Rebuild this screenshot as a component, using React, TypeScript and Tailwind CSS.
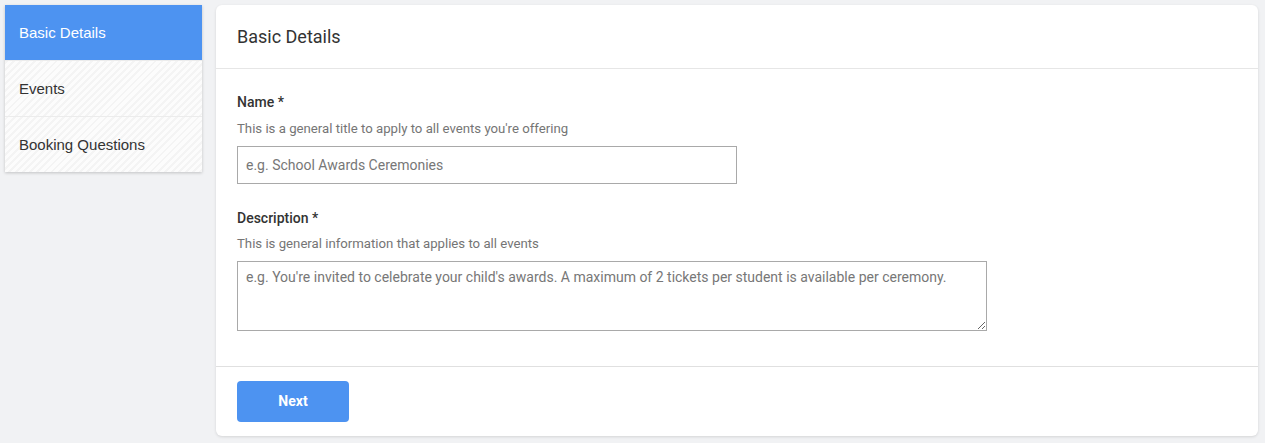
import React from 'react'

const steps = ['Basic Details', 'Events', 'Booking Questions']

export default function App() {
  return (
    <div className="min-h-[443px] bg-[#f1f2f4] pt-[5px] pl-[5px] pr-[7px] flex items-start gap-[14px]" style={{ fontFamily: 'Roboto, "Liberation Sans", sans-serif' }}>
      {/* Step nav */}
      <nav className="w-[197px] shrink-0 bg-[repeating-linear-gradient(135deg,#f4f4f4_0px,#f4f4f4_2px,#fcfcfc_2px,#fcfcfc_5px)] shadow-[0_1px_3px_rgba(0,0,0,0.2)] font-['Liberation_Sans',Arial,sans-serif]">
        {steps.map((s, i) => (
          <div
            key={s}
            className={
              i === 0
                ? 'h-[55px] flex items-center pl-[14px] pt-[2px] text-[15px] text-white bg-[#4d93f1]'
                : 'h-[56px] flex items-center pl-[14px] pt-[2px] text-[15px] text-[#333] border-t border-[#ececec]'
            }
          >
            {s}
          </div>
        ))}
      </nav>

      {/* Card */}
      <div className="flex-1 h-[431px] bg-white rounded-[6px] shadow-[0_1px_3px_rgba(0,0,0,0.12)] flex flex-col">
        <div className="h-[64px] border-b border-[#e6e6e6] flex items-center pl-[21px]">
          <h1 className="text-[18px] text-[#333]">Basic Details</h1>
        </div>

        <div className="pl-[21px] pt-[23px] pb-[35px] border-b border-[#e0e0e0]">
          <label className="block text-[14px] leading-[20px] font-medium text-[#333]">Name *</label>
          <p className="mt-[9px] text-[13.2px] leading-[16px] text-[#757575]">This is a general title to apply to all events you're offering</p>
          <input
            className="mt-[9px] block w-[500px] h-[38px] border border-[#a9a9a9] px-[8px] text-[14px] text-[#333] placeholder:text-[#777] outline-none"
            placeholder="e.g. School Awards Ceremonies"
          />

          <label className="block mt-[24px] text-[14px] leading-[20px] font-medium text-[#333]">Description *</label>
          <p className="mt-[8px] text-[13.2px] leading-[16px] text-[#757575]">This is general information that applies to all events</p>
          <textarea
            className="mt-[9px] block w-[750px] h-[70px] border border-[#a9a9a9] px-[8px] pt-[6px] text-[14px] leading-[18px] text-[#333] placeholder:text-[#777] outline-none"
            placeholder="e.g. You're invited to celebrate your child's awards. A maximum of 2 tickets per student is available per ceremony."
          />
        </div>

        <div className="pl-[21px] pt-[14px]">
          <button className="w-[112px] h-[41px] rounded-[4px] bg-[#4d93f1] text-white text-[14px] font-bold">Next</button>
        </div>
      </div>
    </div>
  )
}
